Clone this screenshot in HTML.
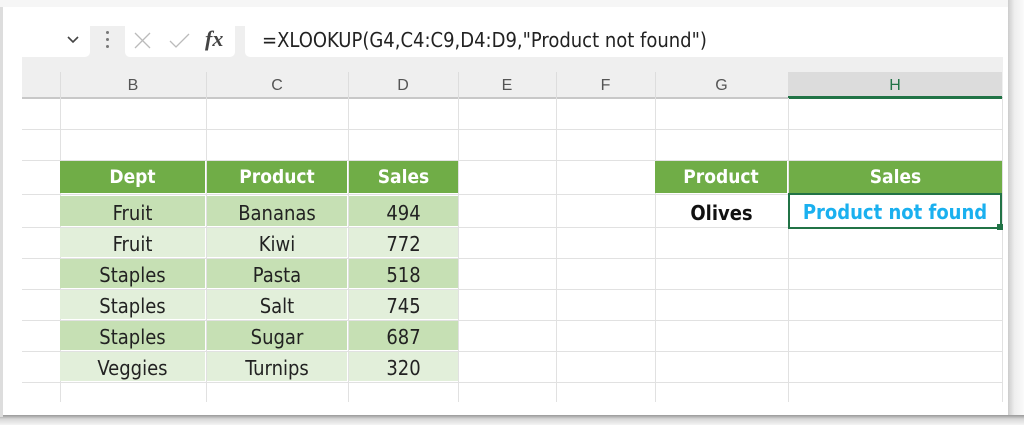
<!DOCTYPE html>
<html><head><style>
*{margin:0;padding:0;box-sizing:border-box}
body{width:1024px;height:425px;background:#fff;position:relative;overflow:hidden;font-family:"Liberation Sans",sans-serif}
.a{position:absolute}
.hl{position:absolute;left:22px;width:980px;height:1px;background:#e1e1e1}
.vl{position:absolute;top:98px;height:304px;width:1px;background:#e1e1e1}
.ch{position:absolute;top:72px;height:26px;line-height:27px;text-align:center;color:#555;font-size:16px}
.c{position:absolute;text-align:center;font-size:20px;color:#222;font-family:"DejaVu Sans Condensed","Liberation Sans",sans-serif}
.g{background:#70ad47;color:#fff;font-weight:bold;height:32px;line-height:33px;font-size:19px}
</style></head><body>
<div class="a" style="left:0;top:0;width:1024px;height:7px;background:#f6f6f6"></div>
<div class="a" style="left:1008px;top:0;width:16px;height:425px;background:linear-gradient(90deg,#ccc,#eee 40%,#fafafa)"></div>
<div class="a" style="left:0;top:415px;width:1024px;height:10px;background:linear-gradient(#999,#d8d8d8 40%,#f4f4f4)"></div>
<div class="a" style="left:0;top:7px;width:3px;height:410px;background:#ddd"></div>
<!-- formula bar -->
<div class="a" style="left:22px;top:26px;width:981px;height:72px;background:#efefef"></div>
<div class="a" style="left:22px;top:26px;width:68px;height:31px;background:#fff;border-radius:0 0 5px 0"></div>
<div class="a" style="left:125px;top:26px;width:110px;height:31px;background:#fff;border-radius:0 0 5px 5px"></div>
<div class="a" style="left:245px;top:26px;width:758px;height:31px;background:#fff;border-radius:0 0 0 5px"></div>
<svg class="a" style="left:66px;top:34px" width="14" height="10"><path d="M2 3 L7 8 L12 3" stroke="#444" stroke-width="1.6" fill="none"/></svg>
<div class="a" style="left:106px;top:31px;width:3px;height:3px;background:#777;border-radius:2px"></div>
<div class="a" style="left:106px;top:38px;width:3px;height:3px;background:#777;border-radius:2px"></div>
<div class="a" style="left:106px;top:45px;width:3px;height:3px;background:#777;border-radius:2px"></div>
<svg class="a" style="left:133px;top:31px" width="60" height="20"><path d="M2 2 L17 17 M17 2 L2 17" stroke="#bbb" stroke-width="1.3"/><path d="M37 10 L43 16 L56 3" stroke="#bbb" stroke-width="1.3" fill="none"/></svg>
<div class="a" style="left:205px;top:26px;font:italic bold 22px 'Liberation Serif',serif;color:#444">fx</div>
<div class="a" style="left:262px;top:28px;font-size:20px;color:#222;font-family:'DejaVu Sans Condensed','Liberation Sans',sans-serif">=XLOOKUP(G4,C4:C9,D4:D9,"Product not found")</div>
<!-- col headers -->
<div class="a" style="left:788px;top:72px;width:214px;height:26px;background:#dcdcdc"></div>
<div class="a" style="left:22px;top:97px;width:981px;height:2px;background:#c8c8c8"></div>
<div class="a" style="left:788px;top:96px;width:214px;height:3px;background:#217346"></div>
<div class="ch" style="left:60px;width:146px">B</div>
<div class="ch" style="left:206px;width:142px">C</div>
<div class="ch" style="left:348px;width:110px">D</div>
<div class="ch" style="left:458px;width:98px">E</div>
<div class="ch" style="left:556px;width:99px">F</div>
<div class="ch" style="left:655px;width:133px">G</div>
<div class="ch" style="left:788px;width:214px;color:#217346">H</div>
<div class="a" style="left:60px;top:72px;width:1px;height:26px;background:#ddd"></div>
<div class="a" style="left:206px;top:72px;width:1px;height:26px;background:#ddd"></div>
<div class="a" style="left:348px;top:72px;width:1px;height:26px;background:#ddd"></div>
<div class="a" style="left:458px;top:72px;width:1px;height:26px;background:#ddd"></div>
<div class="a" style="left:556px;top:72px;width:1px;height:26px;background:#ddd"></div>
<div class="a" style="left:655px;top:72px;width:1px;height:26px;background:#ddd"></div>
<!-- grid -->
<div class="hl" style="top:129px"></div><div class="hl" style="top:160px"></div><div class="hl" style="top:194px"></div>
<div class="hl" style="top:227px"></div><div class="hl" style="top:258px"></div><div class="hl" style="top:289px"></div>
<div class="hl" style="top:320px"></div><div class="hl" style="top:351px"></div><div class="hl" style="top:382px"></div>
<div class="vl" style="left:60px"></div><div class="vl" style="left:206px"></div><div class="vl" style="left:348px"></div>
<div class="vl" style="left:458px"></div><div class="vl" style="left:556px"></div><div class="vl" style="left:655px"></div>
<div class="vl" style="left:788px"></div><div class="vl" style="left:1002px"></div>
<!-- table -->
<div class="c g" style="left:60px;top:161px;width:145px">Dept</div>
<div class="c g" style="left:207px;top:161px;width:140px">Product</div>
<div class="c g" style="left:349px;top:161px;width:109px">Sales</div>
<div class="c g" style="left:655px;top:161px;width:132px">Product</div>
<div class="c g" style="left:789px;top:161px;width:213px">Sales</div>

<div class="c" style="left:60px;top:196px;width:145px;height:30px;line-height:34px;background:#c6e0b4">Fruit</div>
<div class="c" style="left:207px;top:196px;width:140px;height:30px;line-height:34px;background:#c6e0b4">Bananas</div>
<div class="c" style="left:349px;top:196px;width:109px;height:30px;line-height:34px;background:#c6e0b4">494</div>
<div class="c" style="left:60px;top:228px;width:145px;height:29px;line-height:32px;background:#e2efda">Fruit</div>
<div class="c" style="left:207px;top:228px;width:140px;height:29px;line-height:32px;background:#e2efda">Kiwi</div>
<div class="c" style="left:349px;top:228px;width:109px;height:29px;line-height:32px;background:#e2efda">772</div>
<div class="c" style="left:60px;top:259px;width:145px;height:29px;line-height:32px;background:#c6e0b4">Staples</div>
<div class="c" style="left:207px;top:259px;width:140px;height:29px;line-height:32px;background:#c6e0b4">Pasta</div>
<div class="c" style="left:349px;top:259px;width:109px;height:29px;line-height:32px;background:#c6e0b4">518</div>
<div class="c" style="left:60px;top:290px;width:145px;height:29px;line-height:32px;background:#e2efda">Staples</div>
<div class="c" style="left:207px;top:290px;width:140px;height:29px;line-height:32px;background:#e2efda">Salt</div>
<div class="c" style="left:349px;top:290px;width:109px;height:29px;line-height:32px;background:#e2efda">745</div>
<div class="c" style="left:60px;top:321px;width:145px;height:29px;line-height:32px;background:#c6e0b4">Staples</div>
<div class="c" style="left:207px;top:321px;width:140px;height:29px;line-height:32px;background:#c6e0b4">Sugar</div>
<div class="c" style="left:349px;top:321px;width:109px;height:29px;line-height:32px;background:#c6e0b4">687</div>
<div class="c" style="left:60px;top:352px;width:145px;height:29px;line-height:32px;background:#e2efda">Veggies</div>
<div class="c" style="left:207px;top:352px;width:140px;height:29px;line-height:32px;background:#e2efda">Turnips</div>
<div class="c" style="left:349px;top:352px;width:109px;height:29px;line-height:32px;background:#e2efda">320</div>

<div class="c" style="left:655px;top:196px;width:133px;height:32px;line-height:34px;font-weight:bold;color:#111">Olives</div>
<div class="a" style="left:788px;top:193px;width:214px;height:36px;border:2px solid #217346;background:#fff"></div>
<div class="a" style="left:997px;top:224px;width:6px;height:6px;background:#217346"></div>
<div class="c" style="left:788px;top:195px;width:214px;height:32px;line-height:34px;font-weight:bold;color:#1ab0ef;font-size:20px;white-space:nowrap">Product not found</div>
</body></html>
